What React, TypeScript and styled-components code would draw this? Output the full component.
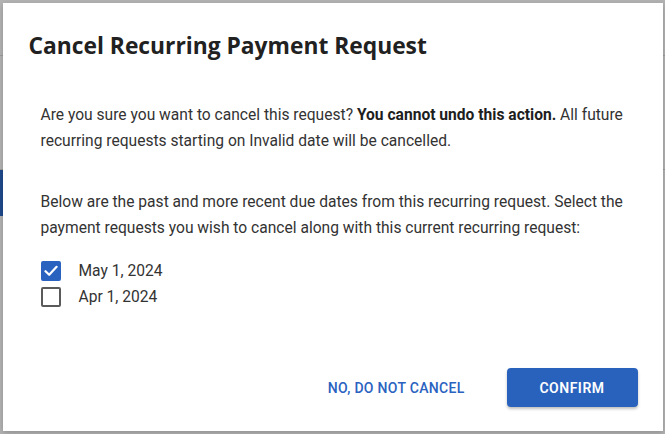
import React, { useState } from "react";
import styled, { createGlobalStyle } from "styled-components";

const Global = createGlobalStyle`
  html, body { margin: 0; padding: 0; }
  body { font-family: Roboto, "Noto Sans", sans-serif; background: #b3b3b3; }
  * { box-sizing: border-box; }
`;

const Page = styled.div`
  position: relative;
  width: 665px;
  height: 434px;
  overflow: hidden;
  background: #b3b3b3;
  display: grid;
  grid-template-rows: 56px 114px 46px 1fr;
`;

const BgBand = styled.div<{ $line?: boolean }>`
  display: flex;
  border-bottom: ${(p) => (p.$line ? "1px solid #9c9c9c" : "none")};
`;

const BgBlue = styled.div`
  width: 40px;
  background: #1f4a8c;
`;

const Overlay = styled.div`
  position: absolute;
  inset: 0;
  display: flex;
  align-items: center;
  justify-content: center;
`;

const Dialog = styled.div`
  width: 660px;
  height: 428px;
  background: #fff;
  display: flex;
  flex-direction: column;
  padding: 0 0 24px;
  box-shadow: 0 2px 6px rgba(0, 0, 0, 0.2);
`;

const Title = styled.h2`
  margin: 0;
  padding: 28px 26px 0 26px;
  font-family: "Open Sans", sans-serif;
  font-weight: 700;
  font-size: 22.8px;
  line-height: 30px;
  color: #212121;
`;

const Body = styled.div`
  flex: 1;
  padding: 42px 30px 0 38px;
  display: flex;
  flex-direction: column;
`;

const Para = styled.p`
  margin: 0 0 36px;
  font-size: 15.6px;
  line-height: 25.5px;
  color: #333;
  strong { font-weight: 700; color: #1e1e1e; }
`;

const List = styled.div`
  display: flex;
  flex-direction: column;
  gap: 6px;
  margin-top: -16px;
`;

const Row = styled.label`
  display: flex;
  align-items: center;
  gap: 18px;
  height: 20px;
  font-size: 15.6px;
  color: #333;
  cursor: pointer;
`;

const Box = styled.span<{ $checked: boolean }>`
  width: 20px;
  height: 20px;
  border-radius: 2px;
  display: inline-flex;
  align-items: center;
  justify-content: center;
  background: ${(p) => (p.$checked ? "#2a62bf" : "#fff")};
  border: 2px solid ${(p) => (p.$checked ? "#2a62bf" : "#5a5a5a")};
`;

const Footer = styled.div`
  display: flex;
  justify-content: flex-end;
  align-items: center;
  gap: 42px;
  padding: 0 25px 0 0;
`;

const TextButton = styled.button`
  background: none;
  border: none;
  padding: 0;
  font-family: Roboto, sans-serif;
  font-size: 14px;
  font-weight: 500;
  letter-spacing: 0.3px;
  color: #2a62bf;
  cursor: pointer;
`;

const PrimaryButton = styled.button`
  width: 131px;
  height: 39px;
  border: none;
  border-radius: 4px;
  background: #2962bd;
  color: #fff;
  font-family: Roboto, sans-serif;
  font-size: 14px;
  font-weight: 600;
  letter-spacing: 0.5px;
  box-shadow: 0 2px 3px rgba(0, 0, 0, 0.25);
  cursor: pointer;
`;

const Check = () => (
  <svg width="14" height="12" viewBox="0 0 14 12">
    <path d="M1.5 6.2 L5.2 9.8 L12.6 1.8" fill="none" stroke="#fff" strokeWidth="2.2" strokeLinecap="round" strokeLinejoin="round" />
  </svg>
);

export default function App() {
  const [items, setItems] = useState([
    { label: "May 1, 2024", checked: true },
    { label: "Apr 1, 2024", checked: false },
  ]);
  const toggle = (i: number) =>
    setItems((prev) => prev.map((it, j) => (j === i ? { ...it, checked: !it.checked } : it)));

  return (
    <Page>
      <Global />
      <BgBand $line />
      <BgBand $line />
      <BgBand>
        <BgBlue />
      </BgBand>
      <BgBand />
      <Overlay>
        <Dialog>
          <Title>Cancel Recurring Payment Request</Title>
          <Body>
            <Para>
              Are you sure you want to cancel this request? <strong>You cannot undo this action.</strong> All future
              recurring requests starting on Invalid date will be cancelled.
            </Para>
            <Para>
              Below are the past and more recent due dates from this recurring request. Select the payment requests
              you wish to cancel along with this current recurring request:
            </Para>
            <List>
              {items.map((it, i) => (
                <Row key={it.label} onClick={() => toggle(i)}>
                  <Box $checked={it.checked}>{it.checked && <Check />}</Box>
                  {it.label}
                </Row>
              ))}
            </List>
          </Body>
          <Footer>
            <TextButton>NO, DO NOT CANCEL</TextButton>
            <PrimaryButton>CONFIRM</PrimaryButton>
          </Footer>
        </Dialog>
      </Overlay>
    </Page>
  );
}
